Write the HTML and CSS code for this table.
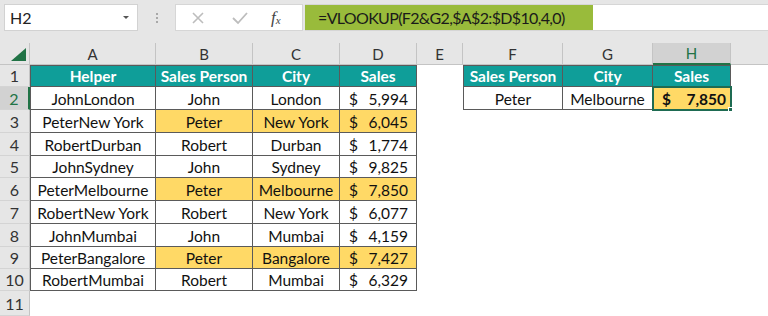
FILE: index.html
```html
<!DOCTYPE html>
<html>
<head>
<meta charset="utf-8">
<link rel="stylesheet" href="styles.css">
</head>
<body>
<div class="app">
  <div class="toolbar">
    <div class="namebox"><span class="nb-text">H2</span><span class="nb-arrow"></span></div>
    <div class="dots"><i></i><i></i><i></i></div>
    <div class="iconbox">
      <svg class="ic-x" width="14" height="14" viewBox="0 0 14 14"><path d="M2 2L12 12M12 2L2 12" stroke="#bdbdbd" stroke-width="1.6" fill="none"/></svg>
      <svg class="ic-ok" width="18" height="14" viewBox="0 0 18 14"><path d="M2 7L7 12L16 2" stroke="#bdbdbd" stroke-width="1.8" fill="none"/></svg>
      <span class="fx">f<sub>x</sub></span>
    </div>
    <div class="formula"><span class="f-hl">=VLOOKUP(F2&amp;G2,$A$2:$D$10,4,0)</span></div>
  </div>
  <div class="sheet">
    <div class="corner"><span class="tri"></span></div>
    <div class="ch">A</div><div class="ch">B</div><div class="ch">C</div><div class="ch">D</div><div class="ch">E</div><div class="ch">F</div><div class="ch">G</div><div class="ch ch-sel">H</div><div class="ch ch-last"></div>

    <div class="rh">1</div>
    <div class="c hd lft top">Helper</div><div class="c hd top">Sales Person</div><div class="c hd top">City</div><div class="c hd top">Sales</div>
    <div class="e"></div>
    <div class="c hd lft top">Sales Person</div><div class="c hd top">City</div><div class="c hd top">Sales</div><div class="e"></div>

    <div class="rh rh-sel">2</div>
    <div class="c lft">JohnLondon</div><div class="c">John</div><div class="c">London</div><div class="c acc"><span>$</span><span>5,994</span></div>
    <div class="e"></div>
    <div class="c lft">Peter</div><div class="c">Melbourne</div><div class="c acc yl sel"><span>$</span><span>7,850</span><i class="handle"></i></div><div class="e"></div>

    <div class="rh">3</div>
    <div class="c lft">PeterNew York</div><div class="c yl">Peter</div><div class="c yl">New York</div><div class="c acc yl"><span>$</span><span>6,045</span></div>
    <div class="e span5"></div>

    <div class="rh">4</div>
    <div class="c lft">RobertDurban</div><div class="c">Robert</div><div class="c">Durban</div><div class="c acc"><span>$</span><span>1,774</span></div>
    <div class="e span5"></div>

    <div class="rh">5</div>
    <div class="c lft">JohnSydney</div><div class="c">John</div><div class="c">Sydney</div><div class="c acc"><span>$</span><span>9,825</span></div>
    <div class="e span5"></div>

    <div class="rh">6</div>
    <div class="c lft">PeterMelbourne</div><div class="c yl">Peter</div><div class="c yl">Melbourne</div><div class="c acc yl"><span>$</span><span>7,850</span></div>
    <div class="e span5"></div>

    <div class="rh">7</div>
    <div class="c lft">RobertNew York</div><div class="c">Robert</div><div class="c">New York</div><div class="c acc"><span>$</span><span>6,077</span></div>
    <div class="e span5"></div>

    <div class="rh">8</div>
    <div class="c lft">JohnMumbai</div><div class="c">John</div><div class="c">Mumbai</div><div class="c acc"><span>$</span><span>4,159</span></div>
    <div class="e span5"></div>

    <div class="rh">9</div>
    <div class="c lft">PeterBangalore</div><div class="c yl">Peter</div><div class="c yl">Bangalore</div><div class="c acc yl"><span>$</span><span>7,427</span></div>
    <div class="e span5"></div>

    <div class="rh">10</div>
    <div class="c lft">RobertMumbai</div><div class="c">Robert</div><div class="c">Mumbai</div><div class="c acc"><span>$</span><span>6,329</span></div>
    <div class="e span5"></div>

    <div class="rh">11</div>
    <div class="e span9"></div>
  </div>
</div>
</body>
</html>
```

FILE: styles.css
```css
* { box-sizing: border-box; }
html, body { margin: 0; padding: 0; background: #fff; }
body { width: 768px; height: 316px; overflow: hidden; font-family: Lato, "Liberation Sans", sans-serif; }

.app { display: flex; flex-direction: column; height: 316px; }

.toolbar {
  height: 43px;
  background: #e6e6e6;
  display: flex;
  align-items: flex-start;
  padding-top: 4px;
  padding-left: 4px;
}
.namebox {
  width: 134px; height: 27px;
  background: #fff;
  border: 1px solid #d2d2d2;
  display: flex; align-items: center; justify-content: space-between;
  padding: 0 8px 0 5px;
  font-size: 16px; color: #222;
}
.nb-arrow {
  width: 0; height: 0;
  border-left: 3px solid transparent; border-right: 3px solid transparent;
  border-top: 3px solid #555;
}
.dots {
  width: 37px; height: 27px;
  display: flex; flex-direction: column; align-items: center; justify-content: center; gap: 2px;
}
.dots i { width: 2px; height: 2px; background: #a8a8a8; display: block; }

.iconbox {
  width: 128px; height: 27px;
  background: #fff;
  border: 1px solid #d6d6d6;
  display: flex; align-items: center;
  padding-left: 15px;
}
.ic-x { margin-right: 26px; }
.ic-ok { margin-right: 22px; }
.fx { font-family: "Liberation Serif", serif; font-style: italic; font-size: 17px; color: #444; }
.fx sub { font-size: 11px; vertical-align: -1px; }

.formula {
  flex: 1; height: 27px;
  margin-left: 2px;
  background: #fff;
  border-top: 1px solid #d6d6d6; border-bottom: 1px solid #d6d6d6;
  display: flex; align-items: stretch;
}
.f-hl {
  background: #99bb3b;
  width: 288px;
  padding-left: 13px;
  display: flex; align-items: center;
  font-size: 16px; letter-spacing: -0.65px; color: #1a1a1a;
}

.sheet {
  flex: 1;
  display: grid;
  grid-template-columns: 30px 126px 97px 87px 77px 46px 100px 90px 78px 1fr;
  grid-template-rows: 22px 22px 23px 23px 23px 22px 23px 23px 23px 22px 22px 1fr;
  background: #fff;
}
.corner {
  background: #e6e6e6;
  border-right: 1px solid #c4c4c4;
  border-bottom: 1px solid #c4c4c4;
  position: relative;
}
.tri {
  position: absolute; right: 3px; bottom: 3px;
  width: 0; height: 0;
  border-left: 15px solid transparent;
  border-bottom: 13px solid #217346;
}
.ch {
  background: #e6e6e6;
  border-right: 1px solid #c4c4c4;
  border-bottom: 1px solid #c4c4c4;
  display: flex; align-items: center; justify-content: center;
  font-size: 15px; color: #333;
}
.ch-sel { background: #d2d2d2; color: #217346; border-bottom: 2px solid #217346; }
.ch-last { border-right: none; }

.rh {
  background: #e6e6e6;
  border-right: 1px solid #c4c4c4;
  border-bottom: 1px solid #d4d4d4;
  display: flex; align-items: center; justify-content: center;
  font-size: 16px; color: #333;
}
.rh-sel { background: #d2d2d2; color: #217346; border-right: 2px solid #217346; }

.c {
  border-right: 1px solid #5a5a5a;
  border-bottom: 1px solid #5a5a5a;
  display: flex; align-items: center; justify-content: center;
  font-size: 15.5px; color: #111;
  white-space: nowrap;
  padding-top: 1px;
}
.c.lft { border-left: 1px solid #5a5a5a; }
.c.top { border-top: 1px solid #5a5a5a; }
.hd { background: #0f9e99; color: #fff; font-weight: 700; padding-top: 0; }
.yl { background: #ffd966; }
.acc { justify-content: space-between; padding: 1px 8px 0 9px; }
.sel { font-weight: 700; position: relative; outline: 2px solid #1e6b52; outline-offset: -1px; padding-right: 4px; }
.handle {
  position: absolute; right: -3px; bottom: -3px;
  width: 5px; height: 5px;
  background: #1e6b52; border: 1px solid #fff;
}
.e { background: #fff; }
.span5 { grid-column: span 5; }
.span9 { grid-column: span 9; }
```
